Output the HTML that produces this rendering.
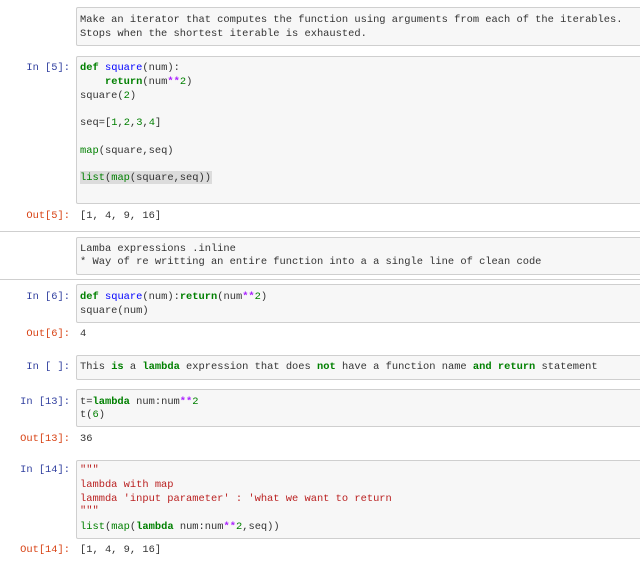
<!DOCTYPE html>
<html><head><meta charset="utf-8"><style>
body{margin:0;width:640px;height:568px;background:#fff;position:relative;overflow:hidden;font-family:"Liberation Mono",monospace;font-size:10.4px;color:#333}
.box{position:absolute;left:76px;right:-2px;background:#f7f7f7;border:1px solid #cfcfcf;border-radius:2px}
.l{position:absolute;white-space:pre;line-height:14px;left:80px}
.p{position:absolute;white-space:pre;line-height:14px;right:570px;text-align:right}
.in{color:#303F9F}.out{color:#D84315}
.k{color:#008000;font-weight:bold}.f{color:#0000ff}.n{color:#008000}.o{color:#AA22FF;font-weight:bold}.s{color:#BA2121}.b{color:#008000}
.sep{position:absolute;left:0;right:0;height:1px;background:#cfcfcf}
</style></head><body>
<div class="box" style="top:7px;height:37px"></div>
<div class="l" style="top:13px">Make an iterator that computes the function using arguments from each of the iterables.</div>
<div class="l" style="top:27px">Stops when the shortest iterable is exhausted.</div>

<div class="box" style="top:56px;height:146px"></div>
<div class="p in" style="top:61px">In [5]:</div>
<div class="l" style="top:61px"><span class="k">def</span> <span class="f">square</span>(num):</div>
<div class="l" style="top:75px">    <span class="k">return</span>(num<span class="o">**</span><span class="n">2</span>)</div>
<div class="l" style="top:89px">square(<span class="n">2</span>)</div>
<div class="l" style="top:116px">seq=[<span class="n">1</span>,<span class="n">2</span>,<span class="n">3</span>,<span class="n">4</span>]</div>
<div class="l" style="top:144px"><span class="b">map</span>(square,seq)</div>
<div style="position:absolute;left:80px;top:171px;width:132px;height:13px;background:#dcdcdc"></div>
<div class="l" style="top:171px"><span class="b">list</span>(<span class="b">map</span>(square,seq))</div>
<div class="p out" style="top:209px">Out[5]:</div>
<div class="l" style="top:209px">[1, 4, 9, 16]</div>
<div class="sep" style="top:231px"></div>

<div class="box" style="top:237px;height:36px"></div>
<div class="l" style="top:242px">Lamba expressions .inline</div>
<div class="l" style="top:255px">* Way of re writting an entire function into a a single line of clean code</div>
<div class="sep" style="top:279px"></div>

<div class="box" style="top:284px;height:37px"></div>
<div class="p in" style="top:290px">In [6]:</div>
<div class="l" style="top:290px"><span class="k">def</span> <span class="f">square</span>(num):<span class="k">return</span>(num<span class="o">**</span><span class="n">2</span>)</div>
<div class="l" style="top:304px">square(num)</div>
<div class="p out" style="top:327px">Out[6]:</div>
<div class="l" style="top:327px">4</div>

<div class="box" style="top:355px;height:23px"></div>
<div class="p in" style="top:360px">In [ ]:</div>
<div class="l" style="top:360px">This <span class="k">is</span> a <span class="k">lambda</span> expression that does <span class="k">not</span> have a function name <span class="k">and</span> <span class="k">return</span> statement</div>

<div class="box" style="top:389px;height:36px"></div>
<div class="p in" style="top:395px">In [13]:</div>
<div class="l" style="top:395px">t=<span class="k">lambda</span> num:num<span class="o">**</span><span class="n">2</span></div>
<div class="l" style="top:408px">t(<span class="n">6</span>)</div>
<div class="p out" style="top:432px">Out[13]:</div>
<div class="l" style="top:432px">36</div>

<div class="box" style="top:460px;height:77px"></div>
<div class="p in" style="top:463px">In [14]:</div>
<div class="l s" style="top:463px">"""</div>
<div class="l s" style="top:478px">lambda with map</div>
<div class="l s" style="top:492px">lammda 'input parameter' : 'what we want to return</div>
<div class="l s" style="top:504px">"""</div>
<div class="l" style="top:520px"><span class="b">list</span>(<span class="b">map</span>(<span class="k">lambda</span> num:num<span class="o">**</span><span class="n">2</span>,seq))</div>
<div class="p out" style="top:543px">Out[14]:</div>
<div class="l" style="top:543px">[1, 4, 9, 16]</div>
</body></html>
